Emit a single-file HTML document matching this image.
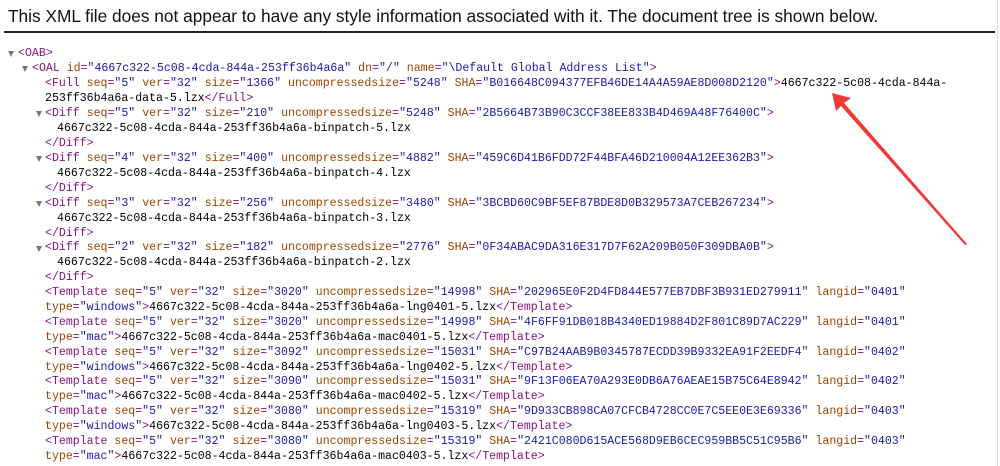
<!DOCTYPE html>
<html><head><meta charset="utf-8"><style>
html,body{margin:0;padding:0;background:#fff;width:1000px;height:466px;overflow:hidden;position:relative}
.hdr{position:absolute;left:8px;top:6px;font-family:"Liberation Sans","Noto Sans CJK SC",sans-serif;font-size:17.3px;color:#111;letter-spacing:0}
.rule{position:absolute;left:4px;top:31px;width:991px;height:2px;background:#222}
.rb{position:absolute;left:997px;top:0;width:1px;height:466px;background:#ddd}
.r{position:absolute;font-family:"Liberation Mono",monospace;font-size:11.57px;line-height:15px;white-space:pre;color:#000}
.t{color:#881280}.n{color:#994500}.v{color:#1a1aa6}
.tri{position:absolute;width:0;height:0;border-left:3.5px solid transparent;border-right:3.5px solid transparent;border-top:6px solid #777}
</style></head><body>
<div class="hdr">This XML file does not appear to have any style information associated with it. The document tree is shown below.</div>
<div class="rule"></div>
<div class="rb"></div>

<div class="tri" style="left:8px;top:51px"></div>
<div class="r" style="left:18px;top:46px"><span class="t">&lt;OAB&gt;</span></div>
<div class="tri" style="left:22px;top:66px"></div>
<div class="r" style="left:32px;top:61px"><span class="t">&lt;OAL </span><span class="n">id</span><span class="t">=</span><span class="v">"4667c322-5c08-4cda-844a-253ff36b4a6a"</span> <span class="n">dn</span><span class="t">=</span><span class="v">"/"</span> <span class="n">name</span><span class="t">=</span><span class="v">"\Default Global Address List"</span><span class="t">&gt;</span></div>
<div class="r" style="left:45px;top:76px"><span class="t">&lt;Full </span><span class="n">seq</span><span class="t">=</span><span class="v">"5"</span> <span class="n">ver</span><span class="t">=</span><span class="v">"32"</span> <span class="n">size</span><span class="t">=</span><span class="v">"1366"</span> <span class="n">uncompressedsize</span><span class="t">=</span><span class="v">"5248"</span> <span class="n">SHA</span><span class="t">=</span><span class="v">"B016648C094377EFB46DE14A4A59AE8D008D2120"</span><span class="t">&gt;</span>4667c322-5c08-4cda-844a-</div>
<div class="r" style="left:45px;top:91px">253ff36b4a6a-data-5.lzx<span class="t">&lt;/Full&gt;</span></div>

<div class="tri" style="left:36px;top:111px"></div>
<div class="r" style="left:45px;top:106px"><span class="t">&lt;Diff </span><span class="n">seq</span><span class="t">=</span><span class="v">"5"</span> <span class="n">ver</span><span class="t">=</span><span class="v">"32"</span> <span class="n">size</span><span class="t">=</span><span class="v">"210"</span> <span class="n">uncompressedsize</span><span class="t">=</span><span class="v">"5248"</span> <span class="n">SHA</span><span class="t">=</span><span class="v">"2B5664B73B90C3CCF38EE833B4D469A48F76400C"</span><span class="t">&gt;</span></div>
<div class="r" style="left:57px;top:121px">4667c322-5c08-4cda-844a-253ff36b4a6a-binpatch-5.lzx</div>
<div class="r" style="left:45px;top:136px"><span class="t">&lt;/Diff&gt;</span></div>

<div class="tri" style="left:36px;top:156px"></div>
<div class="r" style="left:45px;top:151px"><span class="t">&lt;Diff </span><span class="n">seq</span><span class="t">=</span><span class="v">"4"</span> <span class="n">ver</span><span class="t">=</span><span class="v">"32"</span> <span class="n">size</span><span class="t">=</span><span class="v">"400"</span> <span class="n">uncompressedsize</span><span class="t">=</span><span class="v">"4882"</span> <span class="n">SHA</span><span class="t">=</span><span class="v">"459C6D41B6FDD72F44BFA46D210004A12EE362B3"</span><span class="t">&gt;</span></div>
<div class="r" style="left:57px;top:166px">4667c322-5c08-4cda-844a-253ff36b4a6a-binpatch-4.lzx</div>
<div class="r" style="left:45px;top:181px"><span class="t">&lt;/Diff&gt;</span></div>

<div class="tri" style="left:36px;top:201px"></div>
<div class="r" style="left:45px;top:196px"><span class="t">&lt;Diff </span><span class="n">seq</span><span class="t">=</span><span class="v">"3"</span> <span class="n">ver</span><span class="t">=</span><span class="v">"32"</span> <span class="n">size</span><span class="t">=</span><span class="v">"256"</span> <span class="n">uncompressedsize</span><span class="t">=</span><span class="v">"3480"</span> <span class="n">SHA</span><span class="t">=</span><span class="v">"3BCBD60C9BF5EF87BDE8D0B329573A7CEB267234"</span><span class="t">&gt;</span></div>
<div class="r" style="left:57px;top:211px">4667c322-5c08-4cda-844a-253ff36b4a6a-binpatch-3.lzx</div>
<div class="r" style="left:45px;top:226px"><span class="t">&lt;/Diff&gt;</span></div>

<div class="tri" style="left:36px;top:246px"></div>
<div class="r" style="left:45px;top:240px"><span class="t">&lt;Diff </span><span class="n">seq</span><span class="t">=</span><span class="v">"2"</span> <span class="n">ver</span><span class="t">=</span><span class="v">"32"</span> <span class="n">size</span><span class="t">=</span><span class="v">"182"</span> <span class="n">uncompressedsize</span><span class="t">=</span><span class="v">"2776"</span> <span class="n">SHA</span><span class="t">=</span><span class="v">"0F34ABAC9DA316E317D7F62A209B050F309DBA0B"</span><span class="t">&gt;</span></div>
<div class="r" style="left:57px;top:255px">4667c322-5c08-4cda-844a-253ff36b4a6a-binpatch-2.lzx</div>
<div class="r" style="left:45px;top:270px"><span class="t">&lt;/Diff&gt;</span></div>

<div class="r" style="left:45px;top:285px"><span class="t">&lt;Template </span><span class="n">seq</span><span class="t">=</span><span class="v">"5"</span> <span class="n">ver</span><span class="t">=</span><span class="v">"32"</span> <span class="n">size</span><span class="t">=</span><span class="v">"3020"</span> <span class="n">uncompressedsize</span><span class="t">=</span><span class="v">"14998"</span> <span class="n">SHA</span><span class="t">=</span><span class="v">"202965E0F2D4FD844E577EB7DBF3B931ED279911"</span> <span class="n">langid</span><span class="t">=</span><span class="v">"0401"</span></div>
<div class="r" style="left:45px;top:300px"><span class="n">type</span><span class="t">=</span><span class="v">"windows"</span><span class="t">&gt;</span>4667c322-5c08-4cda-844a-253ff36b4a6a-lng0401-5.lzx<span class="t">&lt;/Template&gt;</span></div>
<div class="r" style="left:45px;top:315px"><span class="t">&lt;Template </span><span class="n">seq</span><span class="t">=</span><span class="v">"5"</span> <span class="n">ver</span><span class="t">=</span><span class="v">"32"</span> <span class="n">size</span><span class="t">=</span><span class="v">"3020"</span> <span class="n">uncompressedsize</span><span class="t">=</span><span class="v">"14998"</span> <span class="n">SHA</span><span class="t">=</span><span class="v">"4F6FF91DB018B4340ED19884D2F801C89D7AC229"</span> <span class="n">langid</span><span class="t">=</span><span class="v">"0401"</span></div>
<div class="r" style="left:45px;top:330px"><span class="n">type</span><span class="t">=</span><span class="v">"mac"</span><span class="t">&gt;</span>4667c322-5c08-4cda-844a-253ff36b4a6a-mac0401-5.lzx<span class="t">&lt;/Template&gt;</span></div>
<div class="r" style="left:45px;top:345px"><span class="t">&lt;Template </span><span class="n">seq</span><span class="t">=</span><span class="v">"5"</span> <span class="n">ver</span><span class="t">=</span><span class="v">"32"</span> <span class="n">size</span><span class="t">=</span><span class="v">"3092"</span> <span class="n">uncompressedsize</span><span class="t">=</span><span class="v">"15031"</span> <span class="n">SHA</span><span class="t">=</span><span class="v">"C97B24AAB9B0345787ECDD39B9332EA91F2EEDF4"</span> <span class="n">langid</span><span class="t">=</span><span class="v">"0402"</span></div>
<div class="r" style="left:45px;top:360px"><span class="n">type</span><span class="t">=</span><span class="v">"windows"</span><span class="t">&gt;</span>4667c322-5c08-4cda-844a-253ff36b4a6a-lng0402-5.lzx<span class="t">&lt;/Template&gt;</span></div>
<div class="r" style="left:45px;top:374px"><span class="t">&lt;Template </span><span class="n">seq</span><span class="t">=</span><span class="v">"5"</span> <span class="n">ver</span><span class="t">=</span><span class="v">"32"</span> <span class="n">size</span><span class="t">=</span><span class="v">"3090"</span> <span class="n">uncompressedsize</span><span class="t">=</span><span class="v">"15031"</span> <span class="n">SHA</span><span class="t">=</span><span class="v">"9F13F06EA70A293E0DB6A76AEAE15B75C64E8942"</span> <span class="n">langid</span><span class="t">=</span><span class="v">"0402"</span></div>
<div class="r" style="left:45px;top:389px"><span class="n">type</span><span class="t">=</span><span class="v">"mac"</span><span class="t">&gt;</span>4667c322-5c08-4cda-844a-253ff36b4a6a-mac0402-5.lzx<span class="t">&lt;/Template&gt;</span></div>
<div class="r" style="left:45px;top:404px"><span class="t">&lt;Template </span><span class="n">seq</span><span class="t">=</span><span class="v">"5"</span> <span class="n">ver</span><span class="t">=</span><span class="v">"32"</span> <span class="n">size</span><span class="t">=</span><span class="v">"3080"</span> <span class="n">uncompressedsize</span><span class="t">=</span><span class="v">"15319"</span> <span class="n">SHA</span><span class="t">=</span><span class="v">"9D933CB898CA07CFCB4728CC0E7C5EE0E3E69336"</span> <span class="n">langid</span><span class="t">=</span><span class="v">"0403"</span></div>
<div class="r" style="left:45px;top:419px"><span class="n">type</span><span class="t">=</span><span class="v">"windows"</span><span class="t">&gt;</span>4667c322-5c08-4cda-844a-253ff36b4a6a-lng0403-5.lzx<span class="t">&lt;/Template&gt;</span></div>
<div class="r" style="left:45px;top:434px"><span class="t">&lt;Template </span><span class="n">seq</span><span class="t">=</span><span class="v">"5"</span> <span class="n">ver</span><span class="t">=</span><span class="v">"32"</span> <span class="n">size</span><span class="t">=</span><span class="v">"3080"</span> <span class="n">uncompressedsize</span><span class="t">=</span><span class="v">"15319"</span> <span class="n">SHA</span><span class="t">=</span><span class="v">"2421C080D615ACE568D9EB6CEC959BB5C51C95B6"</span> <span class="n">langid</span><span class="t">=</span><span class="v">"0403"</span></div>
<div class="r" style="left:45px;top:449px"><span class="n">type</span><span class="t">=</span><span class="v">"mac"</span><span class="t">&gt;</span>4667c322-5c08-4cda-844a-253ff36b4a6a-mac0403-5.lzx<span class="t">&lt;/Template&gt;</span></div>

<svg style="position:absolute;left:0;top:0" width="1000" height="466">
<polygon points="832,93 851,98 844,103 967,244 965,245 841,106 836,111" fill="#f03a3a"/>
</svg>
</body></html>
